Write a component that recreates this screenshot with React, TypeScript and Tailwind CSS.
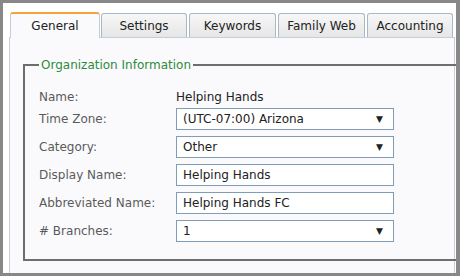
const font = { fontFamily: '"DejaVu Sans", Verdana, sans-serif' }

function Tab({ label, active, className }: { label: string; active?: boolean; className: string }) {
  if (active) {
    return (
      <div
        className={`${className} relative z-10 h-[26px] -mb-px flex items-center justify-center rounded-t-[3px] border border-b-0 border-[#c5cdd6] border-t-2 border-t-[#f3a43a] bg-[#fafafd] text-[12px] text-[#222]`}
      >
        {label}
      </div>
    )
  }
  return (
    <div
      className={`${className} mt-[1px] h-[24px] flex items-center justify-center rounded-t-[3px] border border-b-0 border-[#a9b8c6] bg-gradient-to-b from-[#f7f7f7] to-[#e6e6e6] text-[12px] text-[#222]`}
    >
      {label}
    </div>
  )
}

function Select({ value }: { value: string }) {
  return (
    <div className="w-[218px] h-[22px] flex items-center justify-between border border-[#7f9db9] bg-white pl-[6px] pr-[10px] text-[12px] text-[#222]">
      <span>{value}</span>
      <span className="text-[9px] leading-none">▼</span>
    </div>
  )
}

function TextBox({ value }: { value: string }) {
  return (
    <div className="w-[218px] h-[22px] flex items-center border border-[#7f9db9] bg-white pl-[6px] text-[12px] text-[#222]">
      {value}
    </div>
  )
}

function Row({ label, children }: { label: string; children: React.ReactNode }) {
  return (
    <div className="flex items-center h-[22px]">
      <div className="w-[137px] text-[12px] text-[#5a5a5a]">{label}</div>
      {children}
    </div>
  )
}

export default function App() {
  return (
    <div style={font} className="w-[460px] h-[276px] bg-[#888888] pl-[3px] pt-[3px] pr-[4px] pb-[3px]">
      <div className="w-full h-full bg-white overflow-hidden pl-[6px] pt-[9px] flex flex-col">
        {/* tabs */}
        <div className="flex items-end pl-[1px]">
          <Tab label="General" active className="w-[90px]" />
          <Tab label="Settings" className="w-[86px] ml-[1px]" />
          <Tab label="Keywords" className="w-[87px] ml-[2px]" />
          <Tab label="Family Web" className="w-[87px] ml-[2px]" />
          <Tab label="Accounting" className="w-[86px] ml-[2px]" />
        </div>

        {/* panel */}
        <div className="flex-1 w-[446px] border-l border-t border-r border-[#c5cdd6] bg-[#fafafd]">
          <fieldset className="ml-[13px] mt-[19px] w-[450px] border-2 border-[#6e6e6e] pl-[14px] pt-[13px] pb-[17px]">
            <legend className="px-[2px] text-[12px] leading-[16px] text-[#2e8b3a]">
              Organization Information
            </legend>
            <Row label="Name:">
              <span className="text-[12px] text-[#222]">Helping Hands</span>
            </Row>
            <div className="flex flex-col gap-[6px]">
              <Row label="Time Zone:">
                <Select value="(UTC-07:00) Arizona" />
              </Row>
              <Row label="Category:">
                <Select value="Other" />
              </Row>
              <Row label="Display Name:">
                <TextBox value="Helping Hands" />
              </Row>
              <Row label="Abbreviated Name:">
                <TextBox value="Helping Hands FC" />
              </Row>
              <Row label="# Branches:">
                <Select value="1" />
              </Row>
            </div>
          </fieldset>
        </div>
      </div>
    </div>
  )
}
